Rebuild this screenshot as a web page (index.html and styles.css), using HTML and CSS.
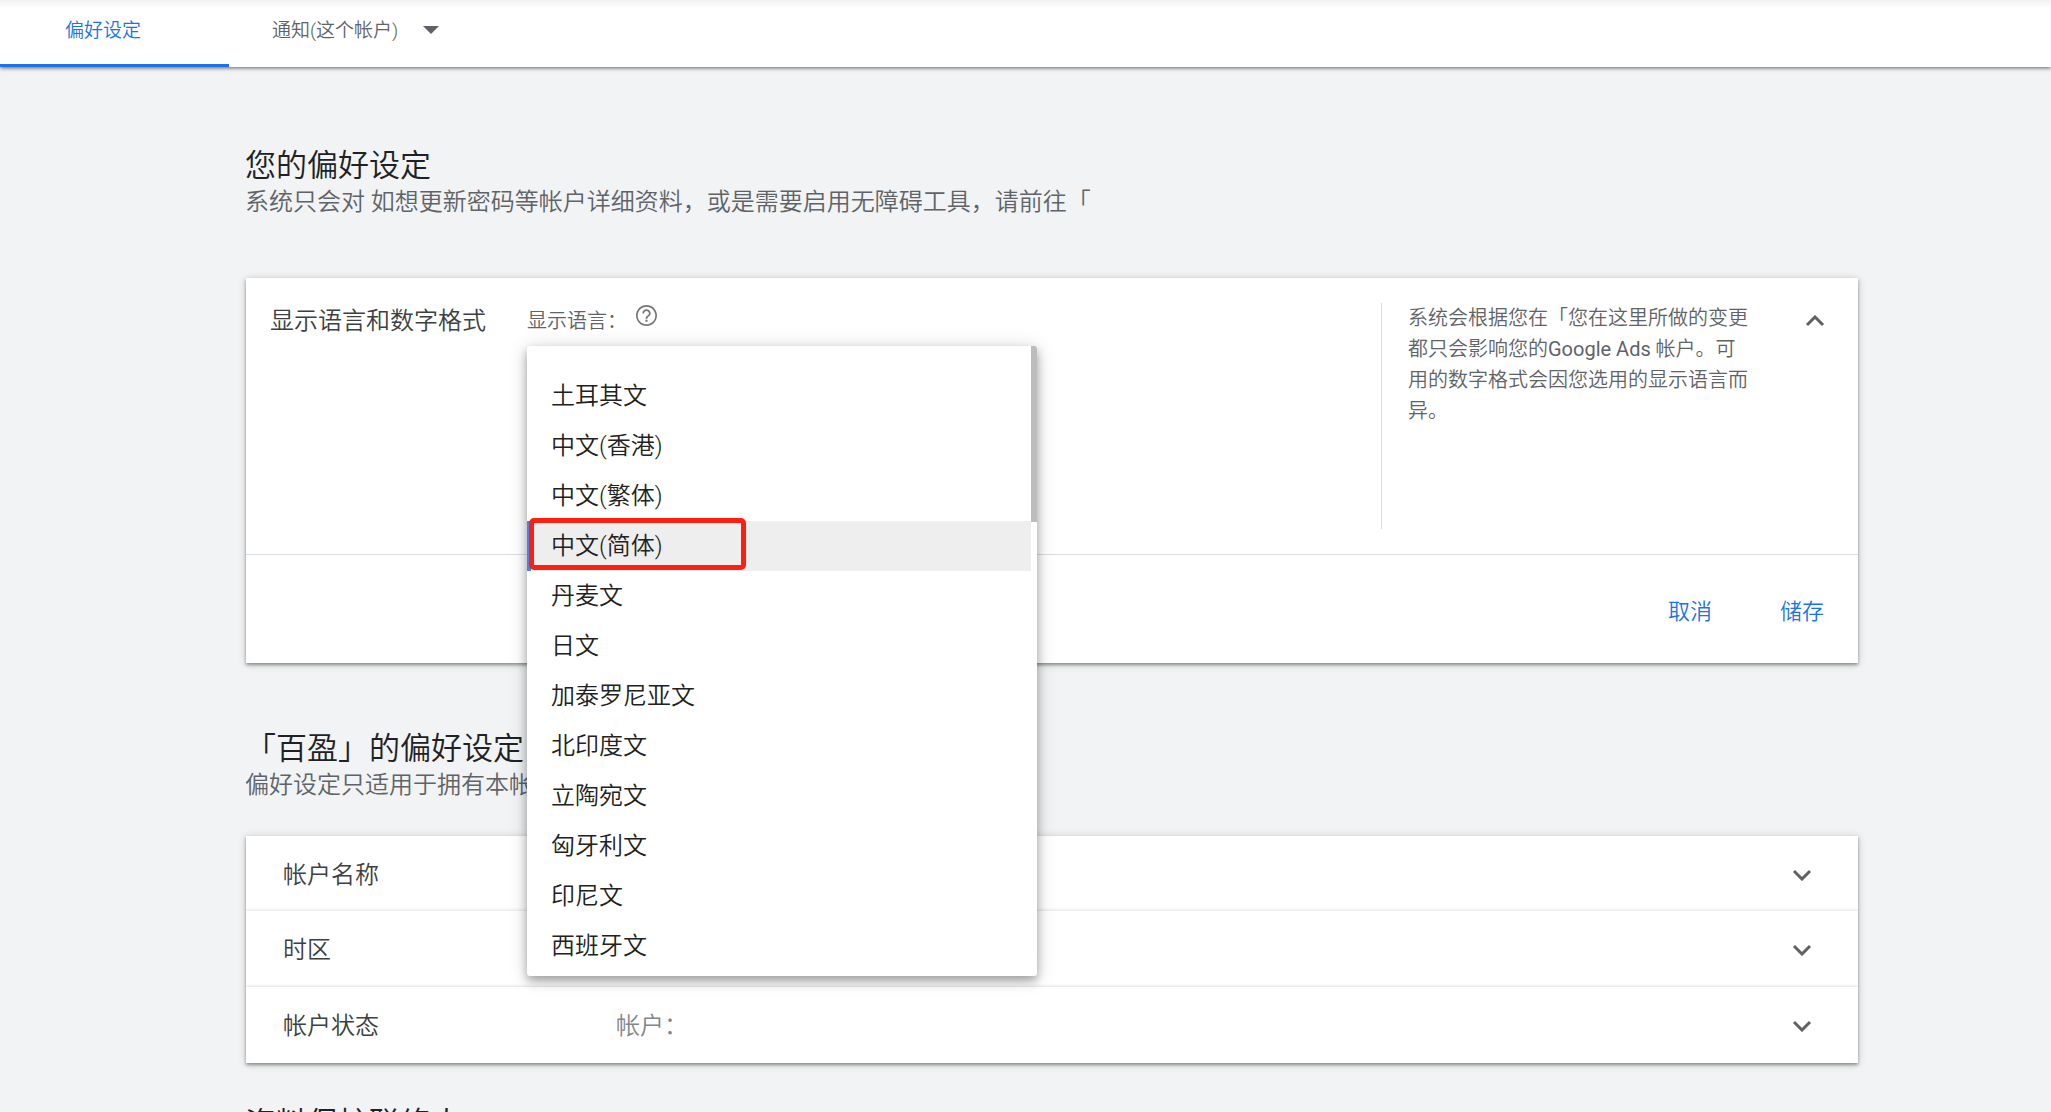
FILE: index.html
```
<!DOCTYPE html>
<html lang="zh-CN">
<head>
    <meta charset="UTF-8">
    <meta name="viewport" content="width=device-width, initial-scale=1.0">
    <title>偏好设定</title>
    <link rel="stylesheet" href="styles.css">
</head>
<body>
    <nav class="tabs">
        <a class="tab active" href="#preferences">偏好设定</a>
        <a class="tab" href="#notifications">通知(这个帐户)
            <svg class="caret" viewBox="0 0 16 8"><path d="M0 0h16L8 8z"/></svg>
        </a>
    </nav>
    <main class="content">
        <section class="section">
            <h1>您的偏好设定</h1>
            <p class="subtitle">系统只会对 如想更新密码等帐户详细资料，或是需要启用无障碍工具，请前往「</p>
            <div class="card">
                <div class="editor">
                    <h2 class="editor-title">显示语言和数字格式</h2>
                    <div class="field">
                        <div class="field-head">
                            <label for="language">显示语言：</label>
                            <button class="icon-button" type="button" aria-label="说明">
                                <svg class="help" viewBox="2 2 20 20"><path d="M11 18h2v-2h-2v2zm1-16C6.480 2 2 6.480 2 12s4.480 10 10 10 10-4.480 10-10S17.520 2 12 2zm0 18.400c-4.600 0-8.400-3.800-8.400-8.400S7.400 3.600 12 3.600s8.400 3.800 8.400 8.400-3.800 8.400-8.400 8.400zm0-14.400c-2.210 0-4 1.790-4 4h1.700c0-1.300 1-2.400 2.300-2.400s2.300 1 2.300 2.400c0 2-3.200 1.750-3.200 5h1.800c0-2.250 3.100-2.500 3.100-5 0-2.210-1.790-4-4-4z"/></svg>
                            </button>
                        </div>
                        <div class="menu">
                            <select id="language" class="menu-list" size="12">
                                <option>土耳其文</option>
                                <option>中文(香港)</option>
                                <option>中文(繁体)</option>
                                <option selected>中文(简体)</option>
                                <option>丹麦文</option>
                                <option>日文</option>
                                <option>加泰罗尼亚文</option>
                                <option>北印度文</option>
                                <option>立陶宛文</option>
                                <option>匈牙利文</option>
                                <option>印尼文</option>
                                <option>西班牙文</option>
                            </select>
                            <div class="menu-thumb"></div>
                            <div class="menu-mark"></div>
                        </div>
                    </div>
                    <p class="hint">系统会根据您在「您在这里所做的变更都只会影响您的<span class="product">Google Ads</span> 帐户。可用的数字格式会因您选用的显示语言而异。</p>
                    <button class="icon-button collapse" type="button" aria-label="收起">
                        <svg class="chevron" viewBox="0 0 20 12"><path d="M2 10l8-8 8 8"/></svg>
                    </button>
                </div>
                <div class="actions">
                    <button class="text-button" type="button">取消</button>
                    <button class="text-button" type="button">储存</button>
                </div>
            </div>
        </section>
        <section class="section account">
            <h1>「百盈」的偏好设定</h1>
            <p class="subtitle">偏好设定只适用于拥有本帐户</p>
            <div class="card">
                <div class="row">
                    <span class="row-name">帐户名称</span>
                    <span class="row-value"></span>
                    <button class="icon-button" type="button" aria-label="展开帐户名称">
                        <svg class="chevron" viewBox="0 0 20 12"><path d="M2 2l8 8 8-8"/></svg>
                    </button>
                </div>
                <div class="row">
                    <span class="row-name">时区</span>
                    <span class="row-value"></span>
                    <button class="icon-button" type="button" aria-label="展开时区">
                        <svg class="chevron" viewBox="0 0 20 12"><path d="M2 2l8 8 8-8"/></svg>
                    </button>
                </div>
                <div class="row">
                    <span class="row-name">帐户状态</span>
                    <span class="row-value">帐户：</span>
                    <button class="icon-button" type="button" aria-label="展开帐户状态">
                        <svg class="chevron" viewBox="0 0 20 12"><path d="M2 2l8 8 8-8"/></svg>
                    </button>
                </div>
            </div>
        </section>
        <section class="section contacts">
            <h1>资料保护联络人</h1>
        </section>
    </main>
</body>
</html>
```
FILE: styles.css
```
* {
    box-sizing: border-box;
}
body {
    margin: 0;
    height: 100vh;
    overflow: hidden;
    background: #f1f3f4;
    color: #202124;
    font-family: Roboto, 'Noto Sans CJK SC', sans-serif;
    font-weight: 350;
}
h1, h2, p {
    margin: 0;
    font-weight: 350;
}
button, select {
    font: inherit;
    border: none;
    background: none;
    padding: 0;
}
button {
    cursor: pointer;
}
svg {
    display: block;
}

/* tabs */
.tabs {
    display: flex;
    height: 67px;
    background: linear-gradient(#f1f1f1, #fff 8px);
    box-shadow: 0 1px 4px rgba(0,0,0,0.6);
}
.tab {
    display: flex;
    align-items: center;
    gap: 25px;
    padding: 0 43px 2px;
    border-bottom: 3px solid transparent;
    font-size: 19px;
    line-height: 28px;
    color: #5f6368;
    text-decoration: none;
}
.tab.active {
    padding: 0 88px 2px 65px;
    border-bottom-color: #1a73e8;
    color: #1a73e8;
}
.caret {
    width: 16px;
    height: 8px;
    margin-bottom: 2px;
    fill: #5f6368;
}

/* sections */
.content {
    padding: 79px 193px 0 245px;
}
.section h1 {
    font-size: 31px;
    line-height: 40px;
}
.subtitle {
    margin-bottom: 60px;
    font-size: 24px;
    line-height: 32px;
    color: #5f6368;
}
.account {
    margin-top: 66px;
}
.account .subtitle {
    margin-bottom: 35px;
}
.contacts {
    margin-top: 41px;
}
.card {
    margin-left: 1px;
    background: #fff;
    box-shadow: 0 2px 3px rgba(0,0,0,0.35), 0 1px 8px rgba(0,0,0,0.18);
}

/* language editor */
.editor {
    display: flex;
    align-items: flex-start;
    height: 276px;
    padding: 25px 33px 25px 24px;
}
.editor-title {
    width: 257px;
    font-size: 24px;
    line-height: 36px;
    color: #3c4043;
}
.field {
    position: relative;
    flex: 1;
}
.field-head {
    display: flex;
    gap: 9px;
    font-size: 20px;
    line-height: 36px;
    color: #5f6368;
}
.icon-button {
    color: #616161;
}
.help {
    width: 21px;
    height: 21px;
    margin-bottom: 12px;
    fill: #757575;
}
.hint {
    width: 372px;
    height: 226px;
    padding-left: 26px;
    border-left: 1px solid #dadce0;
    font-size: 20px;
    line-height: 31px;
    color: #5f6368;
}
.product {
    font-weight: 400;
}
.collapse {
    margin: 12px 0 0 52px;
}
.chevron {
    width: 20px;
    height: 12px;
    fill: none;
    stroke: currentColor;
    stroke-width: 3;
}
.actions {
    display: flex;
    justify-content: flex-end;
    align-items: center;
    gap: 68px;
    height: 109px;
    padding: 6px 34px 0;
    border-top: 1px solid #dadce0;
}
.text-button {
    font-size: 22px;
    line-height: 36px;
    color: #1a73e8;
}

/* open language menu */
.menu {
    position: absolute;
    z-index: 2;
    top: 43px;
    left: 0;
    width: 510px;
    border-radius: 3px;
    background: #fff;
    box-shadow: 0 5px 10px rgba(0,0,0,0.3), 0 2px 20px rgba(0,0,0,0.16);
}
.menu-list {
    display: block;
    width: 504px;
    height: 630px;
    padding: 25px 0 5px;
    overflow: hidden;
    outline: none;
    font-size: 24px;
    color: #212121;
}
.menu-list option {
    height: 50px;
    padding: 5px 24px 0;
    font-weight: 350;
    color: #212121;
}
.menu-list option:checked {
    background: linear-gradient(90deg, #4285f4 4px, #eee 4px);
    color: #212121;
}
.menu-thumb {
    position: absolute;
    top: 0;
    right: 0;
    width: 6px;
    height: 176px;
    border-top-right-radius: 3px;
    background: #bdbdbd;
}
.menu-mark {
    position: absolute;
    top: 172px;
    left: 2px;
    width: 217px;
    height: 52px;
    border: 5px solid #ff1f10;
    border-radius: 5px;
    pointer-events: none;
}

/* account rows */
.row {
    display: flex;
    align-items: center;
    height: 75px;
    padding: 2px 46px 0 37px;
    background: #fff;
    font-size: 24px;
    line-height: 36px;
}
.row + .row {
    height: 76px;
    box-shadow: 0 -1px 3px rgba(0,0,0,0.12);
    clip-path: inset(-4px 0 0 0);
}
.row-name {
    width: 333px;
    color: #3c4043;
}
.row-value {
    flex: 1;
    color: #80868b;
}
```
